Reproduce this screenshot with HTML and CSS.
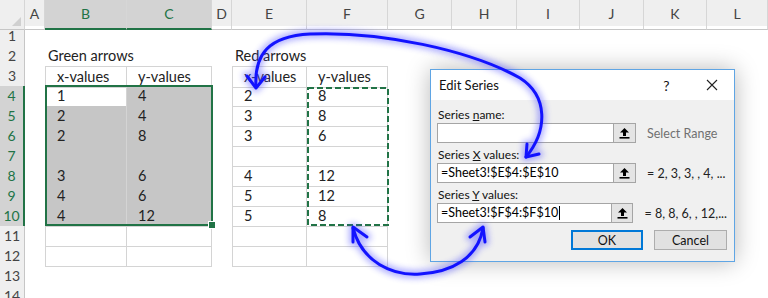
FILE: index.html
```html
<!DOCTYPE html>
<html lang="en">
<head>
  <meta charset="UTF-8">
  <title>Edit Series</title>
  <link rel="stylesheet" href="styles.css">
</head>
<body>
  <div class="page">
    <!-- Worksheet -->
    <div class="sheet">
      <div class="row head">
        <div class="corner"></div>
        <div>A</div>
        <div class="sel">B</div>
        <div class="sel">C</div>
        <div>D</div>
        <div>E</div>
        <div>F</div>
        <div>G</div>
        <div>H</div>
        <div>I</div>
        <div>J</div>
        <div>K</div>
        <div>L</div>
      </div>
      <div class="row"><div class="num">1</div></div>
      <div class="row">
        <div class="num">2</div><div></div>
        <div class="title">Green arrows</div><div></div><div></div>
        <div class="title">Red arrows</div>
      </div>
      <div class="row">
        <div class="num">3</div><div></div>
        <div class="cell first top">x-values</div><div class="cell top">y-values</div><div></div>
        <div class="cell first top">x-values</div><div class="cell top">y-values</div>
      </div>
      <div class="row">
        <div class="num sel">4</div><div></div>
        <div class="cell first">1</div><div class="cell hl">4</div><div></div>
        <div class="cell first">2</div><div class="cell">8</div>
      </div>
      <div class="row">
        <div class="num sel">5</div><div></div>
        <div class="cell first hl">2</div><div class="cell hl">4</div><div></div>
        <div class="cell first">3</div><div class="cell">8</div>
      </div>
      <div class="row">
        <div class="num sel">6</div><div></div>
        <div class="cell first hl">2</div><div class="cell hl">8</div><div></div>
        <div class="cell first">3</div><div class="cell">6</div>
      </div>
      <div class="row">
        <div class="num sel">7</div><div></div>
        <div class="cell first hl"></div><div class="cell hl"></div><div></div>
        <div class="cell first"></div><div class="cell"></div>
      </div>
      <div class="row">
        <div class="num sel">8</div><div></div>
        <div class="cell first hl">3</div><div class="cell hl">6</div><div></div>
        <div class="cell first">4</div><div class="cell">12</div>
      </div>
      <div class="row">
        <div class="num sel">9</div><div></div>
        <div class="cell first hl">4</div><div class="cell hl">6</div><div></div>
        <div class="cell first">5</div><div class="cell">12</div>
      </div>
      <div class="row">
        <div class="num sel">10</div><div></div>
        <div class="cell first hl">4</div><div class="cell hl">12</div><div></div>
        <div class="cell first">5</div><div class="cell">8</div>
      </div>
      <div class="row">
        <div class="num">11</div><div></div>
        <div class="cell first"></div><div class="cell"></div><div></div>
        <div class="cell first"></div><div class="cell"></div>
      </div>
      <div class="row">
        <div class="num">12</div><div></div>
        <div class="cell first"></div><div class="cell"></div><div></div>
        <div class="cell first"></div><div class="cell"></div>
      </div>
      <div class="row"><div class="num">13</div></div>
      <div class="row"><div class="num">14</div></div>
    </div>

    <!-- Selected range B4:C10 -->
    <div class="selection"><span class="handle"></span></div>

    <!-- Edit Series dialog -->
    <div class="dialog">
      <div class="titlebar">
        <span class="dlg-title">Edit Series</span>
        <span class="tb-btn">?</span>
        <span class="tb-btn">
          <svg width="12" height="12" viewBox="0 0 12 12"><path d="M1 1L11 11M11 1L1 11" stroke="#222" stroke-width="1.1" fill="none"/></svg>
        </span>
      </div>
      <div class="dlg-body">
        <div class="label">Series <u>n</u>ame:</div>
        <div class="field">
          <div class="input"></div>
          <div class="pick">
            <svg width="11" height="12" viewBox="0 0 11 12"><path d="M5.5 1L10 5.5H7V9H4V5.5H1Z" fill="#000"/><rect x="0.5" y="10" width="10" height="1.6" fill="#000"/></svg>
          </div>
          <span class="hint muted">Select Range</span>
        </div>
        <div class="label">Series <u>X</u> values:</div>
        <div class="field">
          <div class="input">=Sheet3!$E$4:$E$10</div>
          <div class="pick">
            <svg width="11" height="12" viewBox="0 0 11 12"><path d="M5.5 1L10 5.5H7V9H4V5.5H1Z" fill="#000"/><rect x="0.5" y="10" width="10" height="1.6" fill="#000"/></svg>
          </div>
          <span class="hint">= 2, 3, 3, , 4, ...</span>
        </div>
        <div class="label">Series <u>Y</u> values:</div>
        <div class="field">
          <div class="input">=Sheet3!$F$4:$F$10<span class="caret"></span></div>
          <div class="pick">
            <svg width="11" height="12" viewBox="0 0 11 12"><path d="M5.5 1L10 5.5H7V9H4V5.5H1Z" fill="#000"/><rect x="0.5" y="10" width="10" height="1.6" fill="#000"/></svg>
          </div>
          <span class="hint">= 8, 8, 6, , 12,...</span>
        </div>
        <div class="buttons">
          <button class="btn default">OK</button>
          <button class="btn">Cancel</button>
        </div>
      </div>
    </div>

    <!-- Copy marquee and hand-drawn arrows -->
    <svg class="overlay" width="768" height="298" viewBox="0 0 768 298">
      <defs>
        <filter id="blur" x="-20%" y="-20%" width="140%" height="140%">
          <feGaussianBlur stdDeviation="3"/>
        </filter>
        <g id="arrows">
          <path d="M256 87C254 55 268 36 310 34C380 31 470 50 520 78C548 96 548 130 526 157"/>
          <path d="M247 76L256 88L265 77"/>
          <path d="M527 144L526 157L539 154"/>
          <path d="M353 228C362 262 392 276 420 274C452 272 478 258 483 228"/>
          <path d="M353 242L353 227L367 237"/>
          <path d="M470 237L483 227L485 242"/>
        </g>
      </defs>
      <rect class="ants" x="308" y="88" width="80" height="137"/>
      <use href="#arrows" class="glow" filter="url(#blur)"/>
      <use href="#arrows" class="arrow"/>
    </svg>
  </div>
</body>
</html>
```

FILE: styles.css
```css
body {
  margin: 0;
  background: #fff;
  font-family: Lato, "Liberation Sans", sans-serif;
}

.page {
  position: relative;
  width: 768px;
  height: 298px;
  overflow: hidden;
}

/* sheet grid */
.row {
  display: grid;
  grid-template-columns: 25px 20px 82px 85px 20px 75px 81px 64px 65px 63px 64px 63px 61px;
  height: 20px;
  font-size: 14.5px;
  color: #222;
}

.row > div {
  box-sizing: border-box;
  white-space: nowrap;
  line-height: 20px;
}

.head {
  height: 26px;
  background: #efefef;
  font-size: 14px;
  color: #444;
}

.head > div {
  border-right: 1px solid #d6d6d6;
  border-bottom: 1px solid #c6c6c6;
  text-align: center;
  line-height: 28px;
}

.head .sel {
  background: #d3d3d3;
  color: #217346;
  border-bottom: 2px solid #217346;
}

.corner {
  position: relative;
}

.corner::after {
  content: "";
  position: absolute;
  right: 3px;
  bottom: 3px;
  border-left: 9px solid transparent;
  border-bottom: 9px solid #d0d0d0;
}

.num {
  background: #efefef;
  border-right: 1px solid #c6c6c6;
  border-bottom: 1px solid #dadada;
  text-align: center;
  font-size: 14px;
  color: #444;
}

.num.sel {
  background: #d3d3d3;
  color: #217346;
  border-right: 2px solid #217346;
}

.title {
  padding-left: 3px;
}

.cell {
  border-right: 1px solid #d4d4d4;
  border-bottom: 1px solid #d4d4d4;
  padding-left: 11px;
}

.cell.first {
  border-left: 1px solid #d4d4d4;
}

.cell.top {
  border-top: 1px solid #d4d4d4;
}

.cell.hl {
  background: #c6c6c6;
}

.selection {
  position: absolute;
  left: 45px;
  top: 85px;
  width: 168px;
  height: 141px;
  box-sizing: border-box;
  border: 2px solid #217346;
}

.handle {
  position: absolute;
  right: -5px;
  bottom: -5px;
  width: 6px;
  height: 6px;
  background: #217346;
  border: 1px solid #fff;
}

/* dialog */
.dialog {
  position: absolute;
  left: 430px;
  top: 69px;
  width: 305px;
  height: 193px;
  box-sizing: border-box;
  border: 1px solid #5fa5e4;
  background: #f0f0f0;
  box-shadow: 0 0 22px rgba(0, 0, 0, 0.28);
  font-size: 12px;
  color: #111;
}

.titlebar {
  display: flex;
  align-items: center;
  height: 30px;
  background: #fff;
}

.dlg-title {
  flex: 1;
  padding-left: 8px;
  font-size: 13px;
}

.tb-btn {
  display: flex;
  justify-content: center;
  align-items: center;
  width: 45px;
  font-size: 14px;
}

.dlg-body {
  padding: 6px 7px 0 6px;
}

.label {
  height: 17px;
  line-height: 17px;
  padding-left: 1px;
}

.field {
  display: flex;
  align-items: center;
  height: 20px;
  margin-bottom: 3px;
}

.input {
  box-sizing: border-box;
  width: 177px;
  height: 20px;
  padding-left: 3px;
  border: 1px solid #a5a5a5;
  background: #fff;
  line-height: 18px;
  font-size: 12.5px;
  color: #000;
}

.caret {
  display: inline-block;
  width: 1px;
  height: 14px;
  margin-left: 1px;
  vertical-align: -3px;
  background: #000;
}

.pick {
  display: flex;
  justify-content: center;
  align-items: center;
  box-sizing: border-box;
  width: 22px;
  height: 20px;
  border: 1px solid #a5a5a5;
  border-left: none;
  background: #e4e4e4;
}

.hint {
  margin-left: 11px;
  white-space: nowrap;
  font-size: 12.5px;
  color: #222;
}

.hint.muted {
  color: #707070;
}

.buttons {
  display: flex;
  justify-content: flex-end;
  gap: 11px;
  margin-top: 7px;
}

.btn {
  box-sizing: border-box;
  width: 73px;
  height: 20px;
  padding: 0;
  border: 1px solid #adadad;
  background: #e1e1e1;
  font-family: inherit;
  font-size: 12.5px;
  color: #111;
}

.btn.default {
  width: 72px;
  border: 2px solid #0078d7;
}

/* overlay */
.overlay {
  position: absolute;
  left: 0;
  top: 0;
}

.ants {
  fill: none;
  stroke: #217346;
  stroke-width: 2;
  stroke-dasharray: 6 3;
}

.glow {
  fill: none;
  stroke: #4a4aff;
  stroke-width: 8;
  stroke-linecap: round;
  stroke-linejoin: round;
  opacity: 0.45;
}

.arrow {
  fill: none;
  stroke: #1212ff;
  stroke-width: 3;
  stroke-linecap: round;
  stroke-linejoin: round;
}
```
